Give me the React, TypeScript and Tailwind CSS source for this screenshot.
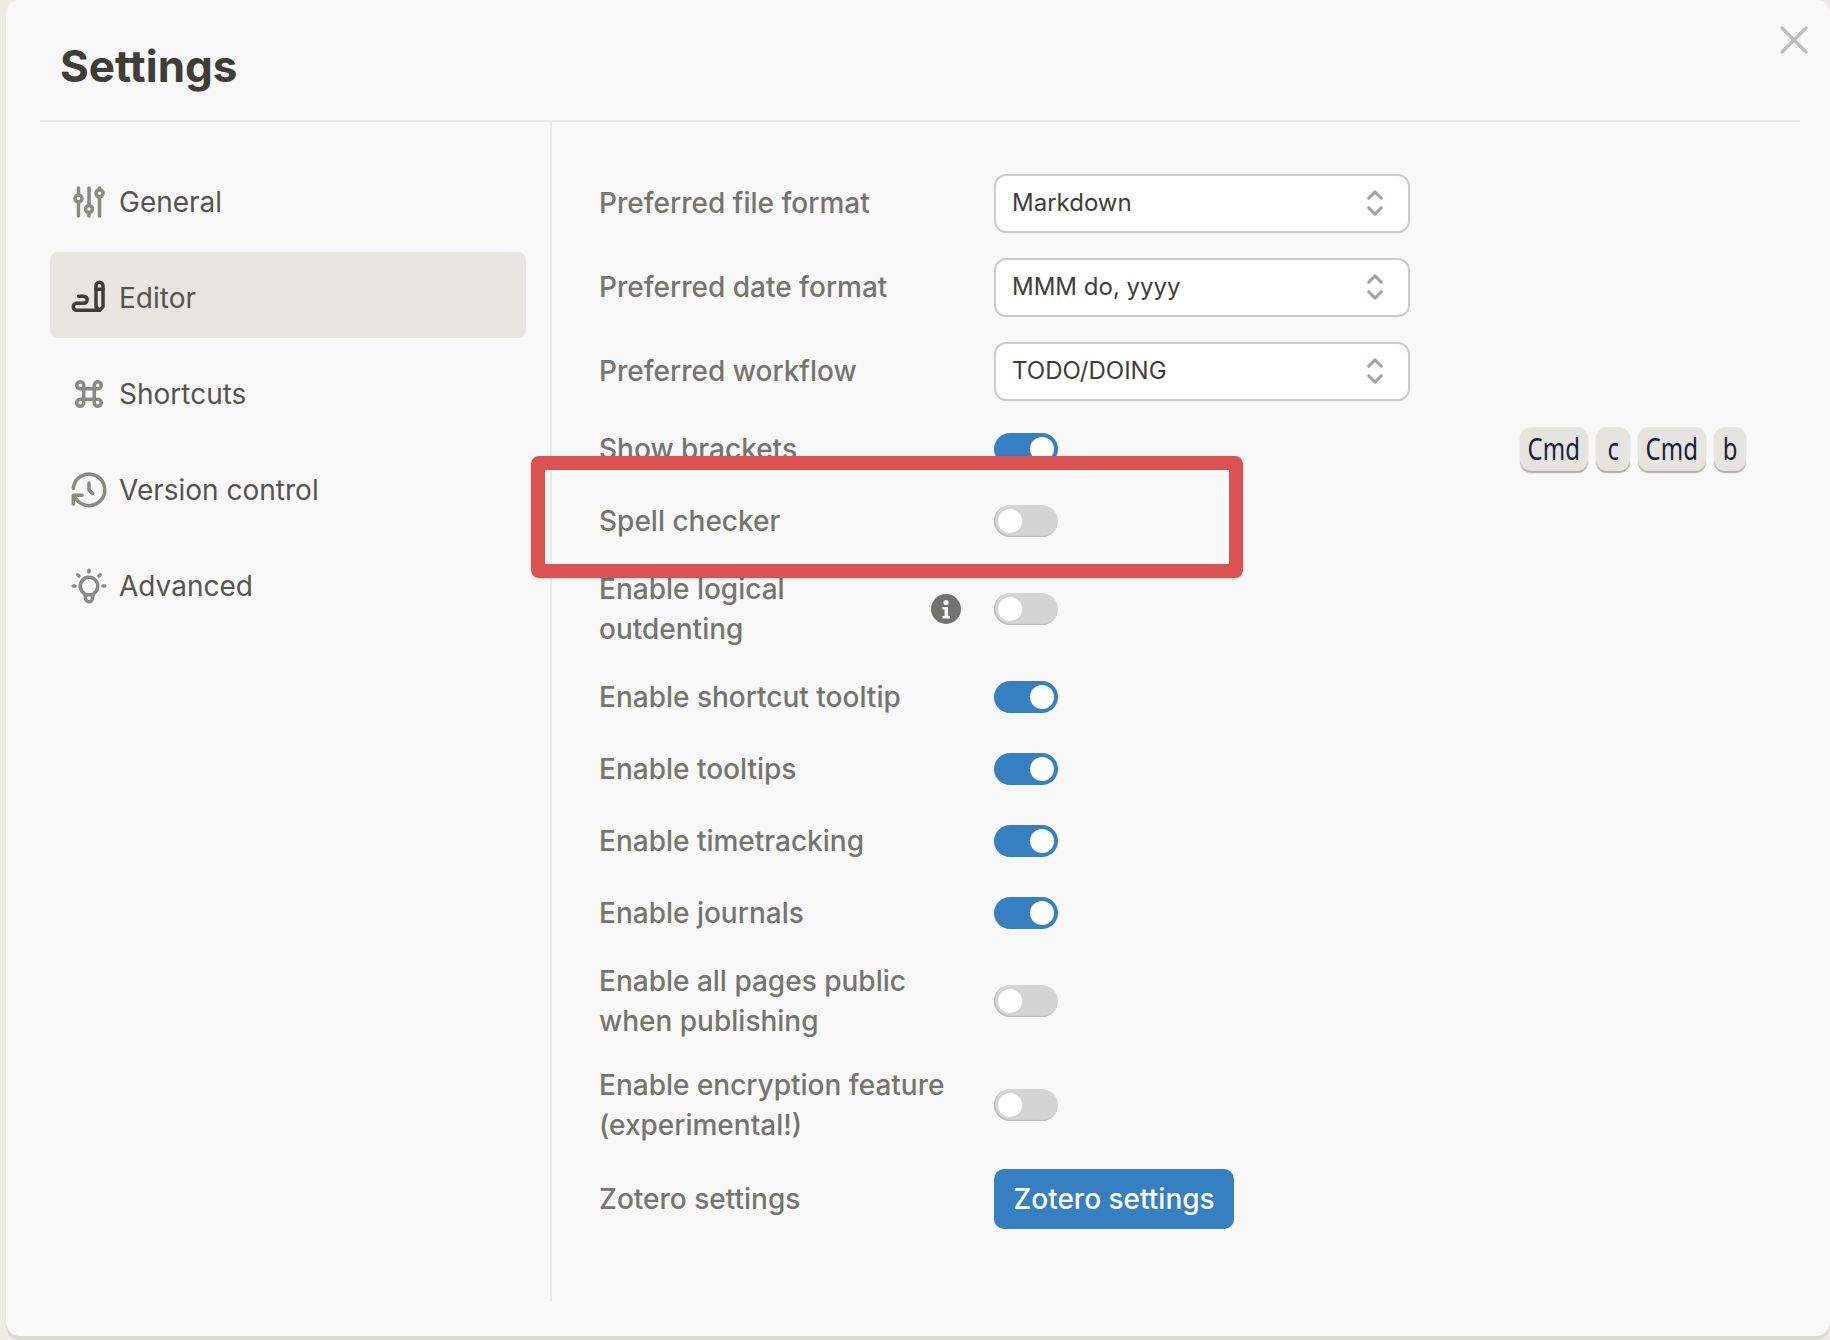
import type { ReactNode } from 'react';
import { TbAdjustments, TbBulb, TbCommand, TbHistory, TbSelector, TbWriting, TbX } from 'react-icons/tb';

const navItems = [
  { label: 'General', icon: TbAdjustments },
  { label: 'Editor', icon: TbWriting, active: true },
  { label: 'Shortcuts', icon: TbCommand },
  { label: 'Version control', icon: TbHistory },
  { label: 'Advanced', icon: TbBulb },
];

function Toggle({ on }: { on?: boolean }) {
  return on ? (
    <div className="flex h-8 w-16 shrink-0 items-center justify-end rounded-full bg-[#3680c1] pr-1">
      <div className="h-6 w-6 rounded-full bg-white" />
    </div>
  ) : (
    <div className="flex h-8 w-16 shrink-0 items-center rounded-full bg-[#d4d4d4] pl-1 shadow-[inset_1px_-1px_1px_#b8b8b8]">
      <div className="h-6 w-6 rounded-full bg-white" />
    </div>
  );
}

function Select({ value }: { value: string }) {
  return (
    <div className="my-[0.5px] flex h-[59px] w-[416px] items-center justify-between rounded-xl border-2 border-[#cbcbcb] bg-white pl-[16px] pr-[14px] text-[24px] text-[#3e3d37]">
      <span>{value}</span>
      <TbSelector className="h-[38px] w-[38px] text-[#9ea3b3]" />
    </div>
  );
}

function InfoIcon() {
  return (
    <svg viewBox="0 0 30 30" className="h-[30px] w-[30px]">
      <circle cx="15" cy="15" r="15" fill="#73736e" />
      <circle cx="15" cy="8.5" r="2.6" fill="#f8f8f8" />
      <path d="M11.5 13h5.5v9h2v2.5h-7.5V22h2v-6.5h-2z" fill="#f8f8f8" />
    </svg>
  );
}

function Row({ label, children, tall, info }: { label: ReactNode; children: ReactNode; tall?: boolean; info?: boolean }) {
  return (
    <div className={`flex items-center ${tall ? 'min-h-[80px]' : 'min-h-[48px]'}`}>
      <div className="mr-[33px] flex w-[362px] shrink-0 items-center justify-between text-[28px] font-medium leading-[40px] text-[#75756f]">
        <div>{label}</div>
        {info && <InfoIcon />}
      </div>
      {children}
    </div>
  );
}

function Kbd({ children, width }: { children: string; width: string }) {
  return (
    <div className={`flex h-[44px] items-center justify-center rounded-[11px] bg-[#e5e4e0] pb-0.5 text-[30px] text-[#1a2238] shadow-[0_2px_1px_#aeaca6] font-['Noto_Sans',sans-serif] ${width}`}>
      <span className="scale-x-[0.8]">{children}</span>
    </div>
  );
}

export default function App() {
  return (
    <div className="relative h-[1340px] w-[1830px] overflow-hidden bg-[#ecebe6] font-['Inter',sans-serif]">
      <div className="ml-[6px] h-[1336px] rounded-[14px] bg-[#f8f8f8] shadow-[0_4px_0_#dadad4]">
        <div className="ml-[34px] mr-[30px] flex h-[122px] items-center border-b-2 border-[#e9e9e4] pl-[20px] pt-[11px]">
          <h1 className="text-[44px] font-bold text-[#3e3d37]">Settings</h1>
        </div>

        <div className="flex h-[1179px]">
          <nav className="flex w-[546px] shrink-0 flex-col gap-[10px] border-r-2 border-[#e9e9e4] pl-[44px] pt-[34px]">
            {navItems.map((item) => {
              const Icon = item.icon;
              return (
                <div
                  key={item.label}
                  className={`flex h-[86px] w-[476px] items-center gap-[9px] rounded-lg pl-[18px] pt-[6px] text-[28px] text-[#55554f] ${item.active ? 'bg-[#e7e6e1]' : ''}`}
                >
                  <Icon className={`h-[42px] w-[42px] ${item.active ? 'text-[#3e3d37]' : 'text-[#8a8a85]'}`} />
                  <span>{item.label}</span>
                </div>
              );
            })}
          </nav>

          <main className="flex flex-1 flex-col gap-[24px] pl-[47px] pr-[84px] pt-[51px]">
            <Row label="Preferred file format"><Select value="Markdown" /></Row>
            <Row label="Preferred date format"><Select value="MMM do, yyyy" /></Row>
            <Row label="Preferred workflow"><Select value="TODO/DOING" /></Row>
            <Row label="Show brackets">
              <Toggle on />
              <div className="ml-auto flex gap-[8px]">
                <Kbd width="w-[68px]">Cmd</Kbd>
                <Kbd width="w-[34px]">c</Kbd>
                <Kbd width="w-[68px]">Cmd</Kbd>
                <Kbd width="w-[32px]">b</Kbd>
              </div>
            </Row>
            <Row label="Spell checker"><Toggle /></Row>
            <Row tall info label={<>Enable logical<br />outdenting</>}><Toggle /></Row>
            <Row label="Enable shortcut tooltip"><Toggle on /></Row>
            <Row label="Enable tooltips"><Toggle on /></Row>
            <Row label="Enable timetracking"><Toggle on /></Row>
            <Row label="Enable journals"><Toggle on /></Row>
            <Row tall label="Enable all pages public when publishing"><Toggle /></Row>
            <Row tall label="Enable encryption feature (experimental!)"><Toggle /></Row>
            <Row label="Zotero settings">
              <button className="h-[60px] w-[240px] rounded-[10px] bg-[#3680c1] text-[28px] font-medium text-white">
                Zotero settings
              </button>
            </Row>
          </main>
        </div>
      </div>

      <TbX className="absolute left-[1770px] top-[16px] h-[48px] w-[48px] stroke-[1.6] text-[#bdbdbd]" />

      {/* red annotation box drawn over the screenshot */}
      <div className="absolute left-[531px] top-[456px] h-[122px] w-[712px] rounded-lg border-[14px] border-[#db5252] shadow-[0_1px_3px_rgba(0,0,0,0.15)]" />
    </div>
  );
}
